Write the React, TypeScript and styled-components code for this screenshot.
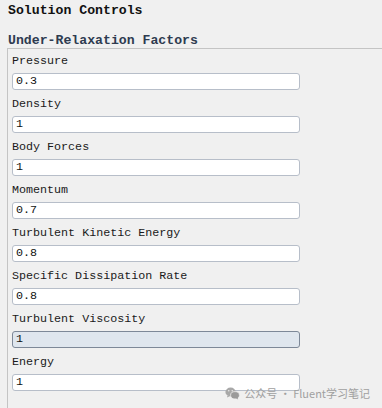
import styled, { createGlobalStyle } from "styled-components";

const GlobalStyle = createGlobalStyle`
  html, body {
    margin: 0;
    padding: 0;
    background: #f0f0f0;
  }
`;

const Panel = styled.div`
  position: relative;
  display: flex;
  flex-direction: column;
  width: 382px;
  height: 408px;
  overflow: hidden;
  background: #f0f0f0;
  font-family: "Liberation Mono", "DejaVu Sans Mono", monospace;
`;

const Title = styled.h1`
  margin: 0;
  padding-left: 8px;
  height: 22px;
  line-height: 22px;
  font-size: 13.2px;
  font-weight: 700;
  color: #111;
`;

const SectionHead = styled.h2`
  margin: 11px 0 0 0;
  padding-left: 8px;
  height: 15px;
  line-height: 15px;
  font-size: 13.2px;
  font-weight: 700;
  color: #2e3b50;
`;

const Group = styled.div`
  flex: 1;
  margin-left: 7px;
  border-top: 1px solid #c4c4c4;
  border-left: 1px solid #c4c4c4;
  padding: 3px 0 0 4px;
`;

const Field = styled.div`
  display: flex;
  flex-direction: column;
  margin-bottom: 5px;
`;

const Label = styled.label`
  height: 18px;
  line-height: 18px;
  font-size: 11.7px;
  color: #1a1a1a;
  margin-bottom: 3px;
`;

const Input = styled.div<{ $active?: boolean }>`
  box-sizing: border-box;
  width: 288px;
  height: 17px;
  line-height: 15px;
  padding-left: 3px;
  border: 1px solid ${(p) => (p.$active ? "#7d8898" : "#b7bec9")};
  border-radius: 3px;
  background: ${(p) => (p.$active ? "#dfe6ee" : "#ffffff")};
  font-size: 11.7px;
  color: #111;
`;

const Watermark = styled.div`
  position: absolute;
  right: 12px;
  bottom: 7px;
  display: flex;
  align-items: center;
  gap: 4px;
  font-family: "Noto Sans CJK SC", "Noto Sans", sans-serif;
  font-size: 11px;
  color: #a0a0a0;
`;

const fields = [
  { label: "Pressure", value: "0.3" },
  { label: "Density", value: "1" },
  { label: "Body Forces", value: "1" },
  { label: "Momentum", value: "0.7" },
  { label: "Turbulent Kinetic Energy", value: "0.8" },
  { label: "Specific Dissipation Rate", value: "0.8" },
  { label: "Turbulent Viscosity", value: "1", active: true },
  { label: "Energy", value: "1" },
];

function WeChatIcon() {
  return (
    <svg width="15" height="13" viewBox="0 0 15 13">
      <ellipse cx="5.6" cy="5" rx="5.2" ry="4.4" fill="#a8a8a8" />
      <path d="M2.6 8.2 L2 10.6 L4.6 9.2 Z" fill="#a8a8a8" />
      <ellipse cx="10" cy="8.3" rx="4.4" ry="3.7" fill="#9a9a9a" stroke="#f0f0f0" strokeWidth="0.8" />
      <path d="M12.4 10.8 L13.2 12.6 L11 11.4 Z" fill="#9a9a9a" />
      <circle cx="3.8" cy="3.8" r="0.7" fill="#f0f0f0" />
      <circle cx="7.2" cy="3.8" r="0.7" fill="#f0f0f0" />
    </svg>
  );
}

export default function App() {
  return (
    <>
      <GlobalStyle />
      <Panel>
        <Title>Solution Controls</Title>
        <SectionHead>Under-Relaxation Factors</SectionHead>
        <Group>
          {fields.map((f) => (
            <Field key={f.label}>
              <Label>{f.label}</Label>
              <Input $active={f.active}>{f.value}</Input>
            </Field>
          ))}
        </Group>
        <Watermark>
          <WeChatIcon />
          <span>公众号 · Fluent学习笔记</span>
        </Watermark>
      </Panel>
    </>
  );
}
